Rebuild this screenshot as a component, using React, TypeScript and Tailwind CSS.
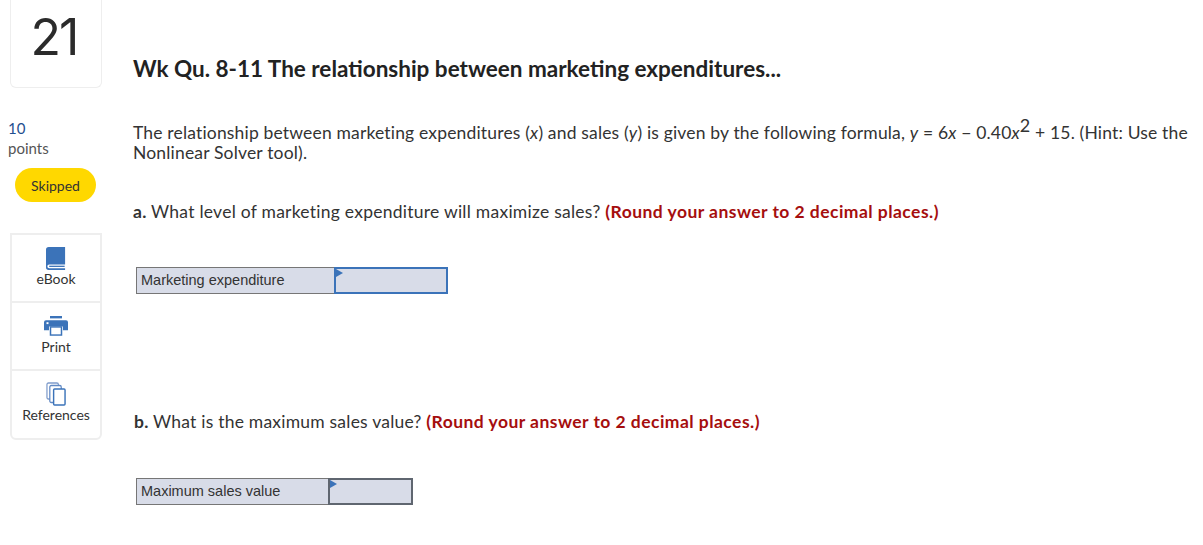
import React from 'react';

const BookIcon = () => (
  <svg width="20" height="23" viewBox="0 0 22 25" preserveAspectRatio="none">
    <path d="M3 0h18v19H3.500a2 2 0 0 0 0 4H21v2H3a3 3 0 0 1-3-3V3a3 3 0 0 1 3-3z" fill="#3b73b9" />
    <rect x="3.500" y="20.300" width="17" height="1.400" fill="#3b73b9" />
  </svg>
);

const PrintIcon = () => (
  <svg width="24" height="20" viewBox="0 0 24 21" preserveAspectRatio="none">
    <rect x="6" y="0" width="12" height="2.500" fill="#3b73b9" />
    <path d="M2 4.500h20a2 2 0 0 1 2 2V15h-5v-4H5v4H0V6.500a2 2 0 0 1 2-2z" fill="#3b73b9" />
    <rect x="2.500" y="6.500" width="2" height="2" fill="#fff" />
    <rect x="6.500" y="11.500" width="11" height="8.500" fill="#fff" stroke="#3b73b9" strokeWidth="1.500" />
  </svg>
);

const RefsIcon = () => (
  <svg width="20" height="24" viewBox="0 0 21 24" preserveAspectRatio="none">
    <rect x="1" y="1" width="12" height="16" rx="1.500" fill="#fff" stroke="#7f9ccb" strokeWidth="1.300" />
    <rect x="4" y="3.500" width="12" height="17" rx="1.500" fill="#fff" stroke="#6189c4" strokeWidth="1.300" />
    <rect x="8" y="7" width="12" height="16" rx="1" fill="#fff" stroke="#3b73b9" strokeWidth="1.500" />
  </svg>
);

const Tool = ({ icon, label, border }: { icon: React.ReactNode; label: string; border?: boolean }) => (
  <div className={`h-[68px] flex flex-col items-center pt-[11px] ${border ? 'border-b-2 border-[#eeeeee]' : ''}`}>
    <div className="h-[24px] flex items-center justify-center">{icon}</div>
    <div className="text-[14px] leading-[18px] text-[#333333]">{label}</div>
  </div>
);

const Entry = ({ label, labelW, inputW, active }: { label: string; labelW: string; inputW: string; active?: boolean }) => (
  <div className="flex h-[27px] ml-[3px] font-['Liberation_Sans',sans-serif] text-[14.500px] text-[#333333]">
    <div className={`${labelW} bg-[#d8dce8] border border-[#767676] border-r-0 pl-[4px] leading-[25px]`}>{label}</div>
    <div className={`${inputW} relative bg-[#d8dce8] border-2 ${active ? 'border-[#3b73b9]' : 'border-[#5f6670]'}`}>
      <div className="absolute left-0 top-0 w-0 h-0 border-y-[4px] border-y-transparent border-l-[7px] border-l-[#3b73b9]" />
    </div>
  </div>
);

export default function App() {
  return (
    <div className="w-[1203px] h-[545px] overflow-hidden bg-white flex font-['Lato',sans-serif] text-[#333333]">
      {/* Left rail */}
      <div className="w-[92px] ml-[10px] shrink-0 flex flex-col">
        <div className="h-[88px] border-x border-b border-[#eeeeee] rounded-b-[6px] flex justify-center pt-[6px]">
          <span className="mr-[4px] font-['Inter',sans-serif] text-[50px] leading-[62px] tracking-[-2px] text-[#2b2b2b]">21</span>
        </div>
        <div className="mt-[30px] -ml-[2px] text-[15px] leading-[20px]">
          <div className="text-[#1f4f8f]">10</div>
          <div className="text-[#555555]">points</div>
        </div>
        <div className="mt-[10px] ml-[5px] w-[81px] h-[34px] rounded-full bg-[#ffd800] flex items-center justify-center text-[14px] text-[#333333]">
          Skipped
        </div>
        <div className="mt-[31px] border-2 border-[#eeeeee] rounded-b-[6px] h-[207px]">
          <Tool icon={<BookIcon />} label="eBook" border />
          <Tool icon={<PrintIcon />} label="Print" border />
          <Tool icon={<RefsIcon />} label="References" />
        </div>
      </div>

      {/* Question */}
      <div className="ml-[31px] flex-1 min-w-0 pt-[55px]">
        <h1 className="text-[22.500px] leading-[28px] font-bold text-[#222222] whitespace-nowrap">
          Wk Qu. 8-11 The relationship between marketing expenditures...
        </h1>
        <p className="mt-[40px] text-[17.500px] leading-[20px] tracking-[0.17px] whitespace-nowrap">
          The relationship between marketing expenditures (<i>x</i>) and sales (<i>y</i>) is given by the following formula, <i>y</i> = 6<i>x</i> − 0.40<i>x</i>
          <sup className="text-[18px] -top-[7px]">2</sup> + 15. (Hint: Use the
          <br />
          Nonlinear Solver tool).
        </p>
        <p className="mt-[39px] text-[17.500px] leading-[20px] tracking-[0.25px] whitespace-nowrap">
          <b>a.</b> What level of marketing expenditure will maximize sales? <b className="text-[#a50e0e] tracking-[0.46px]">(Round your answer to 2 decimal places.)</b>
        </p>
        <div className="mt-[45px]">
          <Entry label="Marketing expenditure" labelW="w-[198px]" inputW="w-[114px]" active />
        </div>
        <p className="mt-[118px] ml-[1px] text-[17.500px] leading-[20px] tracking-[0.22px] whitespace-nowrap">
          <b>b.</b> What is the maximum sales value? <b className="text-[#a50e0e] tracking-[0.46px]">(Round your answer to 2 decimal places.)</b>
        </p>
        <div className="mt-[46px]">
          <Entry label="Maximum sales value" labelW="w-[192px]" inputW="w-[85px]" />
        </div>
      </div>
    </div>
  );
}
